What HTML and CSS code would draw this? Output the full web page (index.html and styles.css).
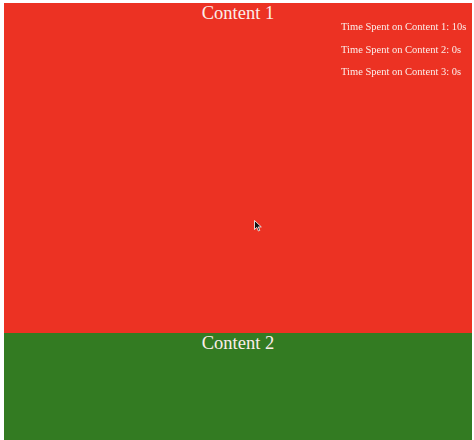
FILE: index.html
```html
<!DOCTYPE html>
<html>
<head>
<meta charset="utf-8">
<link rel="stylesheet" href="styles.css">
</head>
<body>
<main class="page">
  <section class="content content-red"><h2 class="title">Content 1</h2></section>
  <section class="content content-green"><h2 class="title">Content 2</h2></section>
</main>
<div class="stats">
  <p class="stat">Time Spent on Content 1: 10s</p>
  <p class="stat">Time Spent on Content 2: 0s</p>
  <p class="stat">Time Spent on Content 3: 0s</p>
</div>
<svg class="cursor" width="8" height="12" viewBox="0 0 8 12"><path d="M0.5 0.5 L0.5 9.5 L2.8 7.4 L4.4 11 L5.8 10.4 L4.3 6.9 L7.3 6.9 Z" fill="#111" stroke="#fff" stroke-width="0.8"/></svg>
</body>
</html>
```
FILE: styles.css
```css
html, body { margin: 0; padding: 0; background: #fff; }
body { font-family: "Liberation Serif", "Times New Roman", serif; color: #fbeeea; overflow: hidden; height: 440px; }
.page { padding: 3px 2px 0 4px; display: flex; flex-direction: column; }
.content { display: flex; justify-content: center; align-items: flex-start; }
.content-red { background: #ec3223; height: 330px; }
.content-green { background: #337b22; height: 120px; }
.title { margin: 0; font-weight: normal; font-size: 18.5px; line-height: 20px; }
.stats { position: fixed; top: 21px; left: 341px; }
.stat { margin: 0 0 10.5px 0; font-size: 10.5px; line-height: 12px; }
.cursor { position: fixed; left: 254px; top: 220px; }
```
